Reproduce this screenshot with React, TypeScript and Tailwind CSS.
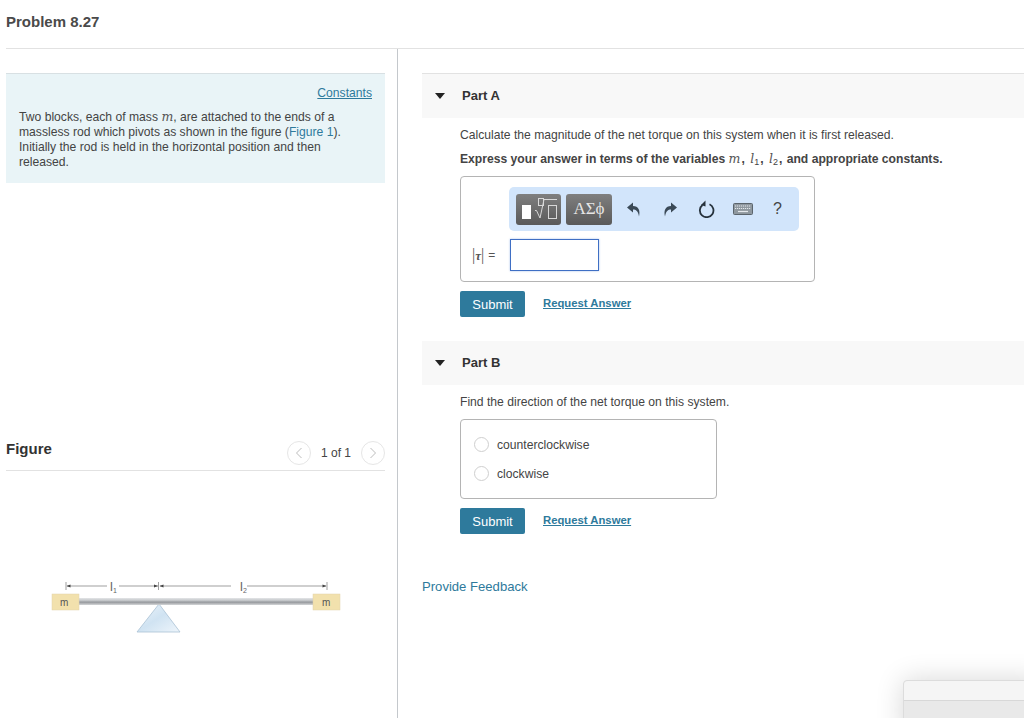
const font = { fontFamily: '"Liberation Sans", Arial, sans-serif' };

function MathVar({ children, className = "" }: { children: React.ReactNode; className?: string }) {
  return <span className={`font-['DejaVu_Serif',serif] italic font-normal text-[12.500px] leading-none text-[#555] ${className}`}>{children}</span>;
}

function PartHeader({ label }: { label: string }) {
  return (
    <div className="flex items-center h-11 bg-[#f8f8f8] pl-[13px]">
      <svg width="10" height="6" viewBox="0 0 10 6" className="mr-[17px]">
        <path d="M0 0h10L5 6z" fill="#222" />
      </svg>
      <span className="text-[13px] font-bold text-[#333]">{label}</span>
    </div>
  );
}

function SubmitRow() {
  return (
    <div className="flex items-center ml-[38px]">
      <button className="w-[65px] h-[26px] pt-[1px] bg-[#2e7a9c] rounded-[2px] text-white text-[13px]">Submit</button>
      <a className="ml-[18px] mb-[1px] text-[11.300px] font-bold text-[#2e7a9c] underline">Request Answer</a>
    </div>
  );
}

function Toolbar() {
  return (
    <div className="flex items-center w-[290px] h-[44px] ml-[48px] bg-[#d2e5fb] rounded-[5px] pl-[7px]">
      <div className="flex items-center w-[45px] h-[31px] rounded-[3px] bg-gradient-to-b from-[#7f7f7f] to-[#5a5a5a] pl-[6px]">
        <span className="w-[9px] h-[14px] mt-[5px] bg-white" />
        <svg width="24" height="24" viewBox="0 0 24 24" fill="none" stroke="#d8d8d8" strokeWidth="1" className="ml-[3px]">
          <rect x="4.500" y="1.500" width="5" height="7" />
          <path d="M1 13.500h1.500L6 21 10 2.500h13" />
          <rect x="14.500" y="8.500" width="8" height="13" />
        </svg>
      </div>
      <div className="flex items-center justify-center w-[46px] h-[31px] ml-[5px] rounded-[3px] bg-gradient-to-b from-[#7f7f7f] to-[#5a5a5a] text-[#e6e6e6] text-[17px] font-['Liberation_Serif',serif]">
        ΑΣϕ
      </div>
      <svg width="14" height="15" viewBox="0 0 14 15" className="ml-[15px]" fill="#3b4a57">
        <path d="M6 0.500L0 5.500l6 5V7.500c3 0 5 1.500 6 7 1.500-6-.5-10.500-6-10.500z" />
      </svg>
      <svg width="14" height="15" viewBox="0 0 14 15" className="ml-[22px]" fill="#3b4a57">
        <path d="M8 0.500l6 5-6 5V7.500c-3 0-5 1.500-6 7C.5 8.500 2.500 4 8 4z" />
      </svg>
      <svg width="18" height="18" viewBox="0 0 18 18" className="ml-[21px]" fill="none" stroke="#26323c" strokeWidth="1.800">
        <path d="M11.500 4.200A6.800 6.800 0 1 1 4.500 5" />
        <path d="M7.500 0.500v6l-4.500-1.500z" fill="#26323c" stroke="none" />
      </svg>
      <svg width="20" height="12" viewBox="0 0 20 12" className="ml-[17px]">
        <rect x="0.500" y="0.500" width="19" height="11" rx="1" fill="#8f989f" stroke="#5b646c" />
        <path d="M2 3h16M2 5.500h16" stroke="#e4e8ec" strokeWidth="1" strokeDasharray="1.200 0.800" />
        <path d="M5 8.500h10" stroke="#e4e8ec" strokeWidth="1.200" />
      </svg>
      <span className="ml-[20px] text-[16px] text-[#444]">?</span>
    </div>
  );
}

function Figure() {
  return (
    <svg width="300" height="60" viewBox="0 0 300 60" className="ml-[43px]">
      <defs>
        <linearGradient id="rod" x1="0" y1="0" x2="0" y2="1">
          <stop offset="0" stopColor="#e4e6e8" />
          <stop offset="0.35" stopColor="#c4c7ca" />
          <stop offset="0.6" stopColor="#96999d" />
          <stop offset="1" stopColor="#d4d6d8" />
        </linearGradient>
        <linearGradient id="wedge" x1="0" y1="0" x2="1" y2="1">
          <stop offset="0" stopColor="#eef5fb" />
          <stop offset="0.5" stopColor="#d0e3f2" />
          <stop offset="1" stopColor="#eef5fb" />
        </linearGradient>
      </defs>
      <g stroke="#777" strokeWidth="0.700" fill="none">
        <path d="M17 6v8M109.500 6v8M278 6v8" />
        <path d="M18 10h40M70 10h39M111 10h71M198 10h79" />
      </g>
      <g fill="#444">
        <path d="M17.500 10l4-1.500v3zM109 10l-4-1.500v3zM110.500 10l4-1.500v3zM277.500 10l-4-1.500v3z" />
      </g>
      <text x="61" y="15" fontSize="13" fill="#666" fontFamily="Liberation Sans">l</text>
      <text x="64" y="17" fontSize="7" fill="#666" fontFamily="Liberation Sans">1</text>
      <text x="191" y="15" fontSize="13" fill="#666" fontFamily="Liberation Sans">l</text>
      <text x="194" y="17" fontSize="7" fill="#666" fontFamily="Liberation Sans">2</text>
      <path d="M88 56L110 28l21 28z" fill="url(#wedge)" stroke="#a9c2d4" strokeWidth="0.800" />
      <rect x="30" y="22" width="234" height="7" fill="url(#rod)" />
      <rect x="3" y="18" width="27" height="16" fill="#f2e1ad" stroke="#e2d4ad" strokeWidth="0.500" />
      <rect x="264" y="18" width="27" height="16" fill="#f2e1ad" stroke="#e2d4ad" strokeWidth="0.500" />
      <text x="11" y="30" fontSize="10" fill="#555" fontFamily="Liberation Sans">m</text>
      <text x="273" y="30" fontSize="10" fill="#555" fontFamily="Liberation Sans">m</text>
    </svg>
  );
}

function Pager() {
  const circle = "flex items-center justify-center w-6 h-6 rounded-full border border-[#e6e6e6]";
  return (
    <div className="flex items-center mt-[2px] text-[12px] text-[#444]">
      <span className={circle}>
        <svg width="8" height="12" viewBox="0 0 8 12" fill="none" stroke="#bdbdbd"><path d="M6.500 1L1.500 6l5 5" /></svg>
      </span>
      <span className="mx-[10px]">1 of 1</span>
      <span className={circle}>
        <svg width="8" height="12" viewBox="0 0 8 12" fill="none" stroke="#bdbdbd"><path d="M1.500 1l5 5-5 5" /></svg>
      </span>
    </div>
  );
}

function Radio({ label }: { label: string }) {
  return (
    <div className="flex items-center h-[29px] pl-[13px]">
      <span className="w-[15px] h-[15px] rounded-full border border-[#cfcfcf] bg-white" />
      <span className="ml-[8px] pt-[1px] text-[12.150px] text-[#444]">{label}</span>
    </div>
  );
}

export default function App() {
  return (
    <div style={font} className="relative w-[1024px] h-[718px] overflow-hidden bg-white text-[#444]">
      <div className="ml-[6px] h-[49px] border-b border-[#e2e2e2] pt-[13px]">
        <h1 className="text-[15px] leading-[18px] font-bold text-[#4a4a4a]">Problem 8.27</h1>
      </div>

      <div className="flex h-[669px]">
        <div className="w-[398px] shrink-0 border-r border-[#c4c8cc] pt-6 pl-[6px] pr-3">
          <div className="h-[110px] bg-[#e9f4f7] border-t border-[#d8e0e3] pt-[12px] px-[13px] text-[12.150px] leading-[15px]">
            <div className="text-right">
              <a className="text-[#2e7a9c] underline">Constants</a>
            </div>
            <p className="mt-[9px] w-[345px]">
              Two blocks, each of mass <MathVar>m</MathVar>, are attached to the ends of a massless rod which pivots as
              shown in the figure (<span className="text-[#2e7a9c]">Figure 1</span>). Initially the rod is held in the
              horizontal position and then released.
            </p>
          </div>

          <div className="flex items-center justify-between h-[36px] mt-[252px] border-b border-[#e2e2e2] pb-[1px]">
            <h2 className="mb-[6px] text-[15px] font-bold text-[#333]">Figure</h2>
            <Pager />
          </div>
          <div className="mt-[105px]">
            <Figure />
          </div>
        </div>

        <div className="flex-1 pt-6 pl-6">
          <div className="border-t border-[#e2e2e2]">
            <PartHeader label="Part A" />
          </div>
          <p className="mt-[9px] ml-[38px] text-[12.150px] leading-[16px]">
            Calculate the magnitude of the net torque on this system when it is first released.
          </p>
          <p className="mt-[8px] ml-[38px] text-[12.150px] leading-[16px] font-bold">
            Express your answer in terms of the variables <MathVar>m</MathVar>
            <span className="ml-[1px]">,</span> <MathVar className="ml-[2px]">l</MathVar>
            <sub className="text-[9px] leading-none font-normal">1</sub>
            <span className="ml-[1px]">,</span> <MathVar className="ml-[2px]">l</MathVar>
            <sub className="text-[9px] leading-none font-normal">2</sub>
            <span className="ml-[1px]">,</span> <span className="ml-[1px]">and appropriate constants.</span>
          </p>
          <div className="w-[355px] h-[106px] ml-[38px] mt-[9px] border border-[#b4b4b4] rounded-[4px] pt-[10px]">
            <Toolbar />
            <div className="flex items-center mt-[8px] ml-[11px]">
              <span className="flex items-center w-[38px] text-[12px] text-[#555]">
                <span className="font-['Liberation_Serif',serif] text-[16px] leading-none">|</span>
                <span className="font-['Liberation_Serif',serif] italic font-bold text-[13px] leading-none">τ</span>
                <span className="font-['Liberation_Serif',serif] text-[16px] leading-none">|</span>
                <span className="ml-[4px]">=</span>
              </span>
              <div className="w-[89px] h-8 border border-[#3f6fc4] shadow-[0_0_2px_#a9c1ea]" />
            </div>
          </div>
          <div className="mt-[9px]">
            <SubmitRow />
          </div>

          <div className="mt-6">
            <PartHeader label="Part B" />
          </div>
          <p className="mt-[9px] ml-[38px] text-[12.150px] leading-[16px]">Find the direction of the net torque on this system.</p>
          <div className="w-[257px] h-[80px] ml-[38px] mt-[9px] border border-[#b4b4b4] rounded-[4px] pt-[10px]">
            <Radio label="counterclockwise" />
            <Radio label="clockwise" />
          </div>
          <div className="mt-[9px]">
            <SubmitRow />
          </div>
          <a className="block mt-[44px] text-[13.100px] leading-[18px] text-[#2e7a9c]">Provide Feedback</a>
        </div>
      </div>

      <div className="absolute left-[903px] top-[680px] w-[140px] h-[60px] rounded-[4px] border border-[#dcdcdc] bg-[#e9e9e9] shadow-[0_0_28px_rgba(0,0,0,0.16)]">
        <div className="h-[20px] rounded-t-[4px] border-b border-[#d8d8d8] bg-[#f5f5f5]" />
      </div>
    </div>
  );
}
